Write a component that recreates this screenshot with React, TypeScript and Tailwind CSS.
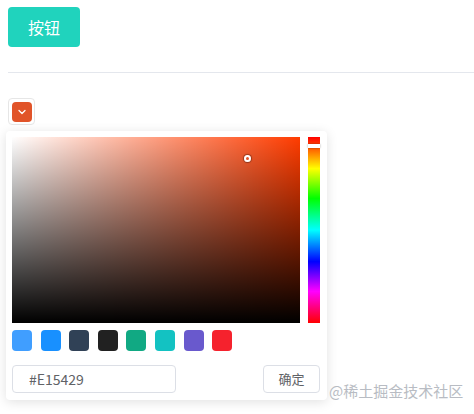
import { ChevronDown } from "lucide-react";

const swatches = ["#409eff", "#1890ff", "#304156", "#212121", "#11a983", "#13c2c2", "#6959cd", "#f5222d"];

export default function App() {
  return (
    <div className="relative min-h-[414px] bg-white font-['Noto_Sans_CJK_SC',sans-serif] text-[#606266]">
      <div className="pl-2 pt-[7px]">
        <button className="h-10 w-[72px] rounded bg-[#20d3bd] text-base text-white">按钮</button>
      </div>

      <div className="ml-2 mt-[25px] h-px bg-[#e4e7ed]" />

      <div className="ml-2 mt-[25px] flex h-[27px] w-[27px] items-center justify-center rounded border border-[#e6e6e6]">
        <div className="flex h-5 w-5 items-center justify-center rounded-sm bg-[#e15429]">
          <ChevronDown className="h-3 w-3 text-white" strokeWidth={2.5} />
        </div>
      </div>

      {/* picker panel */}
      <div className="ml-[6px] mt-[6px] w-[321px] rounded bg-white pb-[7px] pl-[6px] pr-[7px] pt-[6px] shadow-[0_2px_12px_rgba(0,0,0,0.12)]">
        <div className="flex gap-2">
          <div className="relative h-[186px] w-[288px] bg-[#ff3c00]">
            <div className="absolute inset-0 bg-gradient-to-r from-white to-transparent" />
            <div className="absolute inset-0 bg-gradient-to-b from-transparent to-black" />
            <div className="absolute left-[232px] top-[18px] h-[7px] w-[7px] rounded-full border-2 border-white shadow-[0_0_1px_1px_rgba(0,0,0,0.35)]" />
          </div>
          <div className="relative h-[186px] w-3 bg-[linear-gradient(to_bottom,#f00_0%,#ff0_17%,#0f0_33%,#0ff_50%,#00f_67%,#f0f_83%,#f00_100%)]">
            <div className="absolute left-0 top-[7px] h-1 w-3 bg-white shadow-[0_0_2px_rgba(0,0,0,0.4)]" />
          </div>
        </div>

        <div className="mt-[7px] flex gap-[8.6px]">
          {swatches.map((c) => (
            <div key={c} className="h-[21px] w-5 rounded" style={{ backgroundColor: c }} />
          ))}
        </div>

        <div className="mt-[14px] flex items-center justify-between">
          <div className="flex h-7 w-[164px] items-center rounded border border-[#dcdfe6] pl-4 text-sm text-[#606266]">
            #E15429
          </div>
          <button className="h-7 w-[57px] rounded border border-[#dcdfe6] text-[13px] text-[#606266]">确定</button>
        </div>
      </div>

      <div className="absolute left-[329px] top-[381px] text-[15px] leading-5 text-[#b8bcc3] [text-shadow:0_0_2px_#fff]">
        @稀土掘金技术社区
      </div>
    </div>
  );
}
